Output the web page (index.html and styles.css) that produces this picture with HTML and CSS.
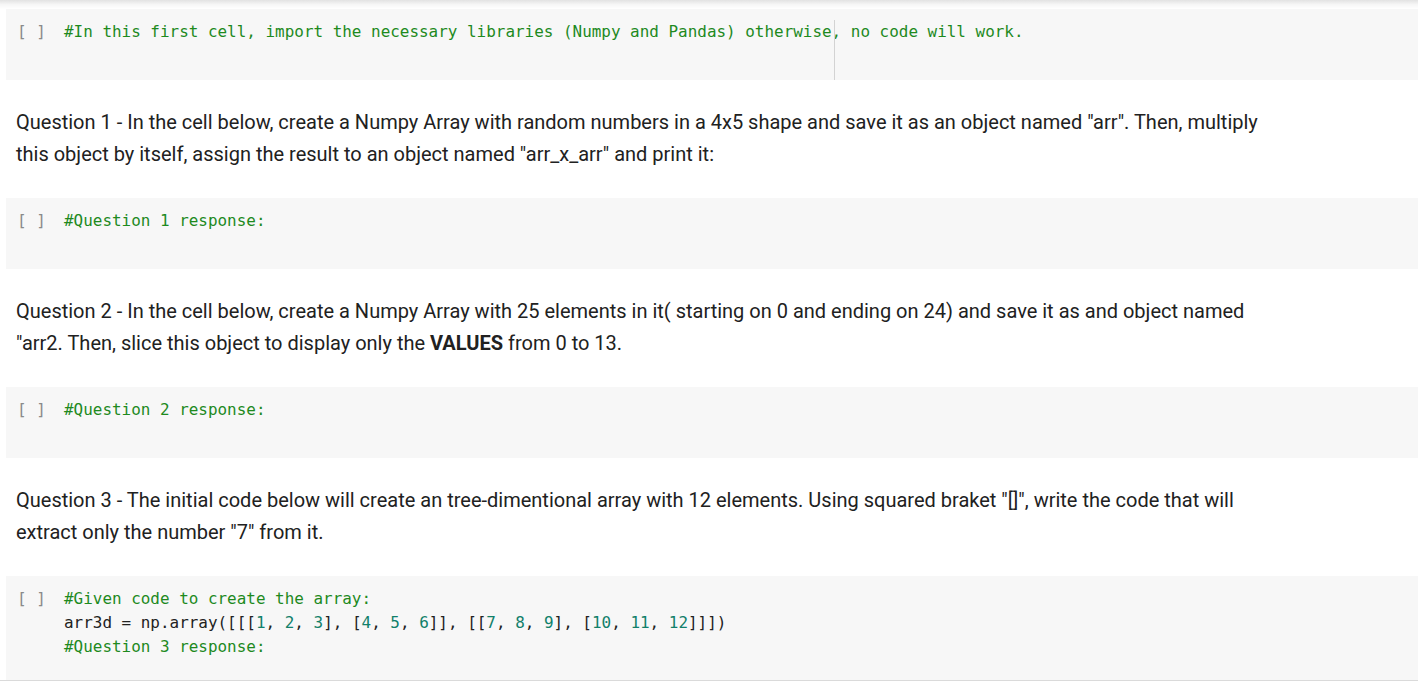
FILE: index.html
```html
<!DOCTYPE html>
<html>
<head>
<meta charset="utf-8">
<link rel="stylesheet" href="styles.css">
</head>
<body>
<div class="topbar"></div>
<main class="notebook">
  <section class="code-cell">
    <div class="prompt">[ ]</div>
    <pre class="code"><span class="c">#In this first cell, import the necessary libraries (Numpy and Pandas) otherwise, no code will work.</span></pre>
    <div class="ruler"></div>
  </section>
  <section class="text-cell">
    <p>Question 1 - In the cell below, create a Numpy Array with random numbers in a 4x5 shape and save it as an object named "arr". Then, multiply this object by itself, assign the result to an object named "arr_x_arr" and print it:</p>
  </section>
  <section class="code-cell">
    <div class="prompt">[ ]</div>
    <pre class="code"><span class="c">#Question 1 response:</span></pre>
  </section>
  <section class="text-cell">
    <p>Question 2 - In the cell below, create a Numpy Array with 25 elements in it( starting on 0 and ending on 24) and save it as and object named "arr2. Then, slice this object to display only the <b>VALUES</b> from 0 to 13.</p>
  </section>
  <section class="code-cell">
    <div class="prompt">[ ]</div>
    <pre class="code"><span class="c">#Question 2 response:</span></pre>
  </section>
  <section class="text-cell">
    <p>Question 3 - The initial code below will create an tree-dimentional array with 12 elements. Using squared braket "[]", write the code that will extract only the number "7" from it.</p>
  </section>
  <section class="code-cell last">
    <div class="prompt">[ ]</div>
    <pre class="code"><span class="c">#Given code to create the array:</span>
arr3d = np.array([[[<span class="n">1</span>, <span class="n">2</span>, <span class="n">3</span>], [<span class="n">4</span>, <span class="n">5</span>, <span class="n">6</span>]], [[<span class="n">7</span>, <span class="n">8</span>, <span class="n">9</span>], [<span class="n">10</span>, <span class="n">11</span>, <span class="n">12</span>]]])
<span class="c">#Question 3 response:</span></pre>
  </section>
</main>
</body>
</html>
```
FILE: styles.css
```css
html, body {
  margin: 0;
  padding: 0;
  background: #ffffff;
  overflow: hidden;
}
.topbar {
  height: 9px;
  background: linear-gradient(#e2e2e2, #f6f6f6 50%, #ffffff);
}
.notebook {
  display: flex;
  flex-direction: column;
}
.code-cell {
  position: relative;
  margin-left: 6px;
  background: #f7f7f7;
  display: flex;
  align-items: flex-start;
  padding: 11px 0 0 11px;
  min-height: 60px;
}
.code-cell.last {
  min-height: 93px;
  border-bottom: 1px solid #dadada;
  margin-left: 0;
  padding-left: 17px;
  box-shadow: inset 6px 0 0 #ffffff;
}
.prompt {
  font-family: "DejaVu Sans Mono", "Liberation Mono", monospace;
  font-size: 16px;
  line-height: 24px;
  color: #8a8a8a;
  width: 47px;
  white-space: pre;
}
.code {
  margin: 0;
  font-family: "DejaVu Sans Mono", "Liberation Mono", monospace;
  font-size: 15.95px;
  line-height: 24px;
  color: #222222;
}
.code .c { color: #1e8a1e; }
.code .n { color: #11806a; }
.ruler {
  position: absolute;
  left: 828px;
  top: 11px;
  bottom: 0;
  width: 1px;
  background: #d3d3d3;
}
.text-cell {
  padding: 26px 0 28px 16px;
}
.text-cell p {
  margin: 0;
  width: 1260px;
  font-family: Roboto, "Noto Sans", sans-serif;
  font-size: 20px;
  line-height: 32px;
  color: #212121;
}
.text-cell b {
  font-weight: 700;
}
```
